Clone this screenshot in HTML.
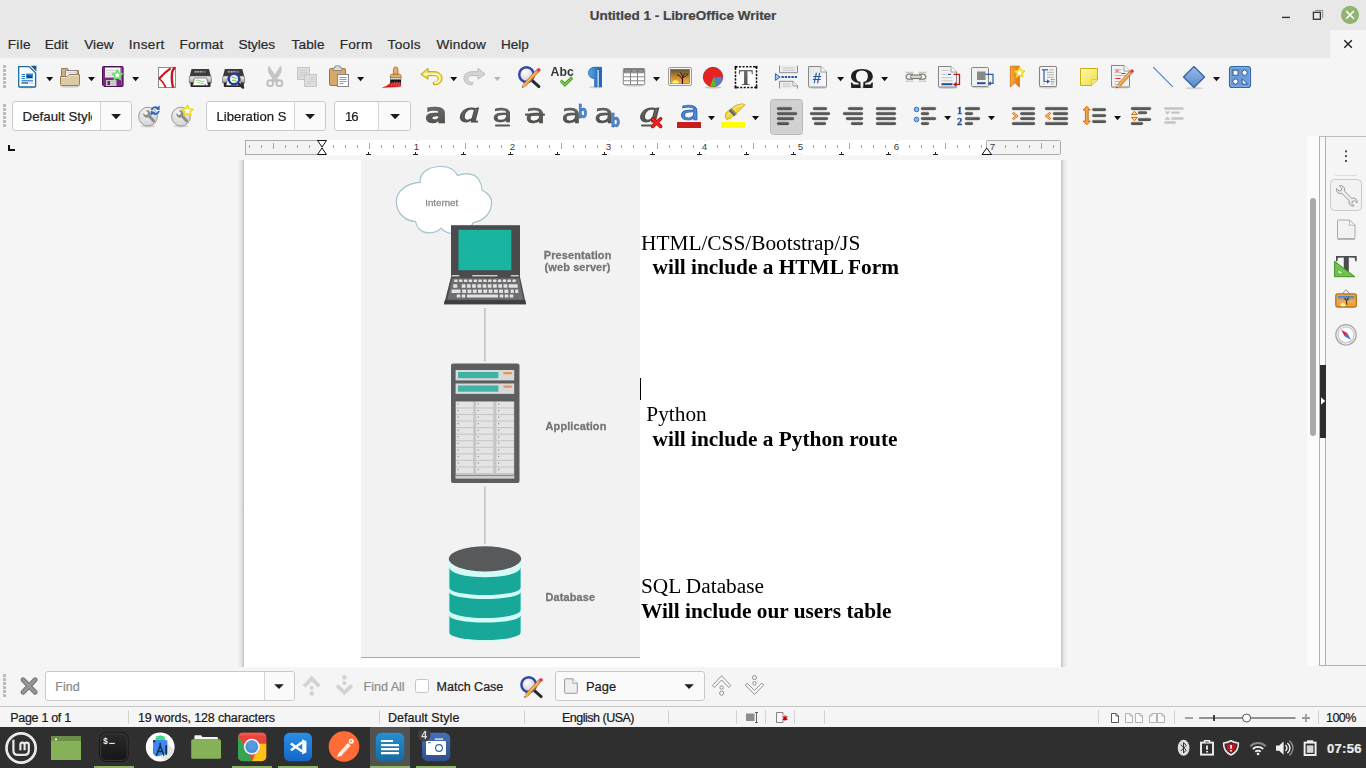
<!DOCTYPE html>
<html lang="en">
<head>
<meta charset="utf-8">
<title>Untitled 1 - LibreOffice Writer</title>
<style>
html,body{margin:0;padding:0;}
body{width:1366px;height:768px;overflow:hidden;position:relative;background:#f5f5f5;font-family:"Liberation Sans",sans-serif;font-size:13.4px;color:#2e2e2e;}
.abs{position:absolute;}
.t{position:absolute;white-space:pre;line-height:16px;-webkit-text-stroke:0.22px;}
svg{position:absolute;overflow:visible;}
/* title + menu */
#titlebar{left:0;top:0;width:1366px;height:58px;background:#e8e8e8;}
#title{left:0;width:1366px;top:8px;text-align:center;font-weight:bold;font-size:13.5px;color:#444;letter-spacing:-0.02px;}
.menu{top:37px;font-size:13.6px;color:#2b2b2b;}
#docclose{left:1330px;top:30px;width:36px;height:28px;background:#f5f5f5;}
/* toolbars */
#tb{left:0;top:58px;width:1366px;height:80px;background:#f5f5f5;}
.combo{position:absolute;background:#fff;border:1px solid #c9c9c9;border-radius:3px;box-sizing:border-box;}
.combo .sep{position:absolute;top:0;bottom:0;width:1px;background:#d4d4d4;}
.arr{position:absolute;width:0;height:0;border-left:4px solid transparent;border-right:4px solid transparent;border-top:4px solid #222;}
.arrs{position:absolute;width:0;height:0;border-left:3.5px solid transparent;border-right:3.5px solid transparent;border-top:4px solid #222;}
/* document */
#page{left:244px;top:160px;width:817px;height:507px;background:#fff;}
#pshadowL{left:237px;top:160px;width:7px;height:507px;background:linear-gradient(to right,#f5f5f5,#ebebeb 45%,#d6d6d6 80%,#bdbdbd);}
#pshadowR{left:1061px;top:160px;width:7px;height:507px;background:linear-gradient(to right,#bdbdbd,#d6d6d6 20%,#ebebeb 55%,#f5f5f5);}
#img{left:361px;top:160px;width:279px;height:497px;background:#f2f2f2;border-bottom:1px solid #a8a8a8;}
#doctext{left:641px;top:230.6px;font-family:"Liberation Serif",serif;font-size:21.33px;line-height:24.53px;color:#000;white-space:pre;}
#doctext b{font-weight:bold;}
#cursor{left:640px;top:378px;width:1.3px;height:22px;background:#000;}
/* find + status */
#findbar{left:0;top:667px;width:1366px;height:39px;background:#f5f5f5;}
#status{left:0;top:706px;width:1366px;height:21px;background:#f5f5f5;border-top:1px solid #c6c6c6;box-sizing:border-box;}
.vsep{position:absolute;width:1px;background:#d0d0d0;}
/* taskbar */
#taskbar{left:0;top:727px;width:1366px;height:41px;background:#2f2f2f;}
</style>
</head>
<body>
<!-- TITLE + MENU -->
<div id="titlebar" class="abs"></div>
<div id="title" class="t">Untitled 1 - LibreOffice Writer</div>
<div id="docclose" class="abs"></div>
<div class="t menu" style="left:7.8px;letter-spacing:0.27px">File</div>
<div class="t menu" style="left:44.8px;letter-spacing:-0.10px">Edit</div>
<div class="t menu" style="left:84.3px;letter-spacing:0.00px">View</div>
<div class="t menu" style="left:128.8px;letter-spacing:0.30px">Insert</div>
<div class="t menu" style="left:179.6px;letter-spacing:0.14px">Format</div>
<div class="t menu" style="left:238.4px;letter-spacing:-0.08px">Styles</div>
<div class="t menu" style="left:291.6px;letter-spacing:0.10px">Table</div>
<div class="t menu" style="left:339.8px;letter-spacing:0.23px">Form</div>
<div class="t menu" style="left:387.6px;letter-spacing:0.30px">Tools</div>
<div class="t menu" style="left:436.4px;letter-spacing:0.24px">Window</div>
<div class="t menu" style="left:501.0px;letter-spacing:-0.07px">Help</div>
<svg id="winbtns" style="left:0;top:0" width="1366" height="60" viewBox="0 0 1366 60">
<path d="M1282,17.4h8" stroke="#333" stroke-width="1.4"/>
<path d="M1315.2,10.4h7.5v7.6" fill="none" stroke="#8a8a8a" stroke-width="1"/>
<rect x="1313.4" y="12.3" width="7" height="7" fill="none" stroke="#333" stroke-width="1.3"/>
<circle cx="1350" cy="14.9" r="9.1" fill="#90b472"/>
<path d="M1346.2,11.1l7.6,7.6M1353.8,11.1l-7.6,7.6" stroke="#fff" stroke-width="1.5"/>
<path d="M1344.3,40.2l7.5,7.5M1351.8,40.2l-7.5,7.5" stroke="#1e1e1e" stroke-width="1.4"/>
</svg>

<!-- TOOLBARS -->
<div id="tb" class="abs"></div>
<svg id="tb1" style="left:0;top:0;will-change:transform" width="1366" height="140" viewBox="0 0 1366 140">
<defs>
<linearGradient id="gPage" x1="0" y1="0" x2="1" y2="1"><stop offset="0" stop-color="#e4e4e4"/><stop offset="1" stop-color="#fbfbfb"/></linearGradient>
<linearGradient id="gBlueV" x1="0" y1="0" x2="0" y2="1"><stop offset="0" stop-color="#9dbde6"/><stop offset="1" stop-color="#5588cc"/></linearGradient>
<linearGradient id="gPil" x1="0" y1="0" x2="1" y2="0"><stop offset="0" stop-color="#58a6ea"/><stop offset="1" stop-color="#1d62ad"/></linearGradient>
<linearGradient id="gSun" x1="0" y1="0" x2="0" y2="1"><stop offset="0" stop-color="#5e5238"/><stop offset="0.55" stop-color="#c98a32"/><stop offset="1" stop-color="#fbb03b"/></linearGradient>
<linearGradient id="gYel" x1="0" y1="0" x2="1" y2="1"><stop offset="0" stop-color="#fdf9b0"/><stop offset="1" stop-color="#f0dc3c"/></linearGradient>
<linearGradient id="gOr" x1="0" y1="0" x2="1" y2="0"><stop offset="0" stop-color="#f9a94a"/><stop offset="1" stop-color="#e4750c"/></linearGradient>
<linearGradient id="gPrn" x1="0" y1="0" x2="0" y2="1"><stop offset="0" stop-color="#f4f4f4"/><stop offset="1" stop-color="#9c9c9c"/></linearGradient>
<linearGradient id="gBar" x1="0" y1="0" x2="0" y2="1"><stop offset="0" stop-color="#8d8f8a"/><stop offset="0.5" stop-color="#555753"/><stop offset="1" stop-color="#3c3d3a"/></linearGradient>
<linearGradient id="gBarD" x1="0" y1="0" x2="0" y2="1"><stop offset="0" stop-color="#d6d6d6"/><stop offset="1" stop-color="#b4b4b4"/></linearGradient>
<linearGradient id="gGlyph" x1="0" y1="0" x2="0" y2="1"><stop offset="0" stop-color="#777975"/><stop offset="1" stop-color="#4a4b48"/></linearGradient>
<radialGradient id="gGlass" cx="0.4" cy="0.35" r="0.7"><stop offset="0" stop-color="#ffffff"/><stop offset="1" stop-color="#c9ccd6"/></radialGradient>
<radialGradient id="gDisc" cx="0.4" cy="0.3" r="0.8"><stop offset="0" stop-color="#f4f4f4"/><stop offset="1" stop-color="#cfcfcf"/></radialGradient>
</defs>
<!-- grips -->
<g fill="#bcbcbc">
<rect x="3" y="65" width="3" height="3"/><rect x="3" y="69" width="3" height="3"/><rect x="3" y="73" width="3" height="3"/><rect x="3" y="77" width="3" height="3"/><rect x="3" y="81" width="3" height="3"/><rect x="3" y="85" width="3" height="3"/>
<rect x="3" y="104" width="3" height="3"/><rect x="3" y="108" width="3" height="3"/><rect x="3" y="112" width="3" height="3"/><rect x="3" y="116" width="3" height="3"/><rect x="3" y="120" width="3" height="3"/><rect x="3" y="124" width="3" height="3"/>
</g>
<!-- dropdown arrows tb1 -->
<g fill="#111">
<path d="M46.2,77h7l-3.5,4.2z"/><path d="M88,77h7l-3.5,4.2z"/><path d="M132.1,77h7l-3.5,4.2z"/><path d="M357.1,77h7l-3.5,4.2z"/><path d="M450.2,77h7l-3.5,4.2z"/><path d="M653,77h7l-3.5,4.2z"/><path d="M837.1,77h7l-3.5,4.2z"/><path d="M881.1,77h7l-3.5,4.2z"/><path d="M1213,77h7l-3.5,4.2z"/>
</g>
<path d="M494,77h6.6l-3.3,4z" fill="#b4b4b4"/>
<!-- new doc -->
<ellipse cx="27.5" cy="87.3" rx="8" ry="1.2" fill="#000" opacity="0.12"/>
<path d="M18.7,66.6h10.5l6.4,6.4v13.2a0.8,0.8 0 0 1 -0.8,0.8h-15.3a0.8,0.8 0 0 1 -0.8,-0.8z" fill="#fff" stroke="#1c6aa0" stroke-width="1.3"/>
<path d="M30.7,65.8h5.7v5.7z" fill="#17598c"/>
<g stroke="#2277c2" stroke-width="1"><path d="M21.5,74.5h3.5M21.5,76.5h3.5M21.5,78.5h3.5"/><path d="M21.5,80.8h11.5" stroke-width="1.2"/><path d="M21.5,83h6.5" stroke-width="1.4" stroke="#1b5f9e"/><path d="M28.5,83h4.5" stroke="#cfcfcf" stroke-width="1.4"/></g>
<rect x="26" y="73.5" width="7" height="5" fill="#2f8de0"/><path d="M27,78v-2l1.5,-1.5l1.5,1.5l1,-1l1,1v2z" fill="#174a7c"/>
<!-- open folder -->
<ellipse cx="70" cy="86.6" rx="9.5" ry="1.2" fill="#000" opacity="0.15"/>
<path d="M61.5,68.5h6l1.5,2h9.5v8h-17z" fill="#c7b08a" stroke="#9a7f55" stroke-width="1"/>
<rect x="65.5" y="70.5" width="11.5" height="7" fill="#fff" stroke="#8a8a8a" stroke-width="1"/>
<rect x="66.5" y="71.5" width="9.5" height="2" fill="#d8d8d8"/>
<path d="M60.5,76.5h6.5l2,-2h10.5v10.2a0.8,0.8 0 0 1 -0.8,0.8h-17.4a0.8,0.8 0 0 1 -0.8,-0.8z" fill="#dccaa7" stroke="#9a7f55" stroke-width="1"/>
<path d="M61.5,77.5h5.9l2,-2h9" stroke="#ece0c8" stroke-width="1" fill="none"/>
<!-- save -->
<path d="M103.3,66.5h19a0.8,0.8 0 0 1 0.8,0.8v18.4a0.8,0.8 0 0 1 -0.8,0.8h-18.2l-1.6,-1.6v-17.6a0.8,0.8 0 0 1 0.8,-0.8z" fill="#77297f" stroke="#4b1355" stroke-width="1"/>
<rect x="105" y="67.5" width="15.5" height="10" fill="#f4f4f4"/>
<path d="M106,70.5h13M106,73h13M106,75.5h13" stroke="#c9c9c9" stroke-width="0.8"/>
<rect x="106" y="80" width="10.5" height="6" fill="#c8c8c4"/><rect x="107.5" y="81" width="2.5" height="4" fill="#5d2a68"/>
<path d="M121.5,67.5v17.5" stroke="#9b4fa4" stroke-width="1"/>
<path d="M117.3,70.2l1.45,3.1l3.4,0.4l-2.5,2.3l0.65,3.35l-3,-1.65l-3,1.65l0.65,-3.35l-2.5,-2.3l3.4,-0.4z" fill="#fbfffb" stroke="#6fdc6f" stroke-width="1.7" stroke-linejoin="round"/>
<!-- pdf -->
<rect x="158.5" y="67.5" width="17" height="20" fill="#fdfdfd" stroke="#8e8e8e" stroke-width="1"/>
<path d="M175.2,67.5C172.6,69 171.6,72 171.8,78C172,83 172.5,86 173.3,87.6" fill="none" stroke="#c8171c" stroke-width="2.4"/>
<path d="M170.6,68.4C166.8,71 162.6,74.8 159,78.8" fill="none" stroke="#c8171c" stroke-width="2.1"/><path d="M159,78.6C161.6,80.4 164.2,84 165.8,87.6" fill="none" stroke="#c8171c" stroke-width="1.7"/>


<!-- printer -->
<g id="prn">
<path d="M191.5,69h17.5l2,8h-21.5z" fill="#3a3a3a"/>
<rect x="194" y="70.8" width="12" height="2" rx="0.5" fill="#6c6c6c"/><path d="M195,71.8h1.5M197.5,71.8h1.5M200,71.8h1.5" stroke="#cfcfcf" stroke-width="0.9"/>
<path d="M189.3,77.5q0,-1.5 1.5,-1.5h19q1.5,0 1.5,1.5v5.5h-22z" fill="url(#gPrn)" stroke="#555" stroke-width="0.6"/>
<path d="M190.5,82.5h20v3.5q0,1 -1,1h-18q-1,0 -1,-1z" fill="#262626"/>
<path d="M194.5,78h12l1.8,7.5h-15.6z" fill="#fff" stroke="#444" stroke-width="0.6"/>
<path d="M196,80.5q2,-1.2 4,0.3t4.5,0.4M197,83q2,-1 3.5,0t3,0.3" stroke="#8fcf6f" stroke-width="1" fill="none"/>
<rect x="204.5" y="84" width="1.5" height="1" fill="#3b8be0"/>
</g>
<!-- print preview -->
<use href="#prn" x="33.3"/>
<path d="M238,83l5,4.5" stroke="#2b2b2b" stroke-width="2.6" stroke-linecap="round"/>
<circle cx="234" cy="79" r="5.2" fill="#f4f7f4" stroke="#2a3b9a" stroke-width="2.4"/>
<path d="M231.5,77.5q1.5,-1 3,0.3t2.3,0.2M232,80.5q1.3,-0.8 2.4,0t2,0.2" stroke="#7cc65c" stroke-width="1.1" fill="none"/>
<!-- scissors (disabled) -->
<g fill="#c6c6c6" stroke="#b9b9b9" stroke-width="0.6">
<path d="M269,66.2c-1.3,3.5 -0.5,6.5 1.6,9.5l4.6,6l2.3,-2.2z"/>
<path d="M280.6,66.2c1.3,3.5 0.5,6.5 -1.6,9.5l-4.6,6l-2.3,-2.2z"/>
</g>
<circle cx="270.2" cy="83.2" r="2.9" fill="none" stroke="#bdbdbd" stroke-width="1.9"/>
<circle cx="279.4" cy="83.2" r="2.9" fill="none" stroke="#bdbdbd" stroke-width="1.9"/>
<!-- copy (disabled) -->
<rect x="297.5" y="67.5" width="12" height="12" fill="#dedede" stroke="#c6c6c6"/>
<path d="M299.5,70.5h8M299.5,72.5h8M299.5,74.5h8M299.5,76.5h4" stroke="#cacaca" stroke-width="0.8"/>
<rect x="304.5" y="74.5" width="12" height="12" fill="#dedede" stroke="#c6c6c6"/>
<path d="M309.8,77.5h5M309.8,79.5h5M306.5,81.5h8M306.5,83.5h4" stroke="#cacaca" stroke-width="0.8"/>
<!-- paste -->
<rect x="329.5" y="68.5" width="16" height="17" rx="1.6" fill="#dba764" stroke="#a5722c" stroke-width="1"/>
<path d="M333,70.5v-2.5h2v-1.5q0,-0.6 0.6,-0.6h4q0.6,0 0.6,0.6v1.5h2v2.5z" fill="#dcdcdc" stroke="#767676" stroke-width="0.8"/>
<rect x="337.5" y="74.5" width="11" height="12" fill="#fcfcfc" stroke="#858585" stroke-width="1"/>
<path d="M339.5,77.5h7M339.5,79.5h7M339.5,81.5h7M339.5,83.5h4" stroke="#8f8f8f" stroke-width="0.9"/>
<!-- clone formatting brush -->
<path d="M384,86.8l14,-1l5,1.4l-21,1z" fill="#000" opacity="0.2"/>
<path d="M393.4,74.4v-4.8q0,-2.7 2.3,-2.7t2.3,2.7v4.8z" fill="#dfae68" stroke="#a06c24" stroke-width="0.8"/>
<path d="M390.4,77.5v-1.7q0,-1.5 1.5,-1.5h7.6q1.5,0 1.5,1.5v1.7z" fill="#e3b26a" stroke="#a06c24" stroke-width="0.8"/>
<rect x="390.3" y="77.3" width="10.8" height="2.4" fill="#d4d4d4" stroke="#5a5a5a" stroke-width="0.5"/>
<path d="M390.3,79.7h10.8l-0.3,6.3h-11z" fill="#151515"/>
<path d="M389.9,83.4q5,-1.6 11,-0.7l-0.3,3.7q-6,0.7 -11.4,0.9l-7.6,0.5q5.2,-1.6 8.3,-4.4z" fill="#dc1a1a"/>
<path d="M392.2,82l-0.6,3.8M394.6,81.6l-0.5,4.2M397,81.6l-0.4,4.2M399.2,81.8l-0.3,3.8" stroke="#f07878" stroke-width="0.7"/>
<!-- undo -->
<path id="undo" d="M420.8,74.3l7.2,-6v3.4h6.2c4.8,0 7.8,2.6 7.8,6.6c0,4 -3.2,6.5 -8.2,6.5l-0.6,-2.3c3.3,0 5,-1.4 5,-3.8c0,-2.2 -1.6,-3.1 -4.2,-3.1h-6v3.6z" fill="#f6e45a" stroke="#b9a008" stroke-width="1" stroke-linejoin="round"/>
<path d="M424.5,74.4h10c3.3,0 5.2,1.6 5.2,3.9c0,2.6 -2,4 -4.6,4.2" fill="none" stroke="#fffbd2" stroke-width="1.3" stroke-linecap="round"/>
<!-- redo disabled -->
<path d="M485.2,74.3l-7.2,-6v3.4h-6.2c-4.8,0 -7.8,2.6 -7.8,6.6c0,4 3.2,6.5 8.2,6.5l0.6,-2.3c-3.3,0 -5,-1.4 -5,-3.8c0,-2.2 1.6,-3.1 4.2,-3.1h6v3.6z" fill="#d4d4d4" stroke="#bcbcbc" stroke-width="1" stroke-linejoin="round"/>
<!-- find & replace -->
<path d="M532.5,80.8l6.4,5.8" stroke="#2a2a2a" stroke-width="3" stroke-linecap="round"/>
<circle cx="526.5" cy="74.6" r="7.3" fill="url(#gGlass)" stroke="#3348a8" stroke-width="2.5"/>
<path d="M523.3,84.2l13.2,-14.4l2.3,2.1l-13.2,14.4l-3.3,1.2z" fill="#f29a2e" stroke="#b5651a" stroke-width="0.6"/>
<path d="M524.5,84.9l12.6,-13.8" stroke="#fbd08a" stroke-width="0.8"/>
<path d="M536.5,69.8l1.2,-1.3q1,-0.8 2,0.1l0.6,0.6q0.8,1 -0.1,1.9l-1.4,0.8z" fill="#e8343c"/>
<path d="M535.6,70.8l0.9,-1l2.3,2.1l-0.9,1z" fill="#9a9a9a"/>
<path d="M522.3,87.5l1,-3.3l2.3,2.1z" fill="#e8c9a0"/><path d="M522.3,87.5l0.4,-1.4l1,0.9z" fill="#222"/>
<!-- spellcheck -->
<text x="550.6" y="76" font-family="Liberation Sans, sans-serif" font-weight="bold" font-size="12.4px" fill="#33393b" textLength="23.2" lengthAdjust="spacingAndGlyphs">Abc</text>
<path d="M560.8,80.5l4,4.2l7.4,-7.2" fill="none" stroke="#3f9e1c" stroke-width="3.2" stroke-linejoin="miter"/>
<path d="M560.8,80.5l4,4.2l7.4,-7.2" fill="none" stroke="#7bd14b" stroke-width="1.4"/>
<!-- pilcrow -->
<ellipse cx="596" cy="87.2" rx="7" ry="1.1" fill="#000" opacity="0.15"/>
<path d="M594.3,67.3h7.2v19.5h-2.6v-17.2h-1.6v17.2h-2.6v-8.3h-0.6a5.6,5.6 0 0 1 0,-11.2z" fill="url(#gPil)" stroke="#1a5a9f" stroke-width="0.8"/><path d="M598.1,70v16.6" stroke="#d8e8f8" stroke-width="1"/>
<!-- table -->
<ellipse cx="634" cy="85.8" rx="10" ry="1" fill="#000" opacity="0.12"/>
<rect x="623.3" y="68.5" width="21.4" height="16.2" rx="0.8" fill="#fff" stroke="#858585" stroke-width="1"/>
<rect x="623.8" y="69" width="20.4" height="3.6" fill="#777"/>
<path d="M625,70.7h4.6M632,70.7h4.6M639,70.7h4.2" stroke="#9d9d9d" stroke-width="1.4"/>
<path d="M623.5,72.8h21M623.5,76.8h21M623.5,80.8h21M630.5,68.5v16M637.5,68.5v16" stroke="#858585" stroke-width="1"/>
</svg>

<svg id="tb1b" style="left:0;top:0;will-change:transform" width="1366" height="140" viewBox="0 0 1366 140">
<!-- image -->
<rect x="668.5" y="67.5" width="23" height="18" rx="1.5" fill="#f4f4f4" stroke="#9b9b9b" stroke-width="1"/>
<rect x="670.5" y="69.5" width="19" height="14" fill="url(#gSun)" stroke="#5a4d36" stroke-width="0.5"/>
<clipPath id="cpImg"><rect x="670.5" y="69.5" width="19" height="14"/></clipPath>
<circle cx="675.5" cy="83.5" r="3.2" fill="#fff27a" clip-path="url(#cpImg)"/>
<path d="M682.4,83.5v-4.5l-2.6,-3l-2.2,-1M682.4,79.5l0.3,-3l2.4,-3.3M682.7,76.5l-2,-3.8M683,77.5l3.3,-1.5l1.7,-2.5" stroke="#151008" stroke-width="0.9" fill="none" stroke-linecap="round"/>
<path d="M681.9,83.5v-3.5h1.2v3.5z" fill="#151008"/>
<!-- chart -->
<ellipse cx="713" cy="87.3" rx="8.5" ry="1.2" fill="#000" opacity="0.18"/>
<circle cx="713" cy="77" r="9.7" fill="#e62323" stroke="#b51414" stroke-width="0.8"/>
<path d="M713.5,77.3h9.2a9.7,9.7 0 0 1 -6.4,8.8z" fill="#4f83c6"/>
<path d="M713.5,77.3l2.8,8.8a9.7,9.7 0 0 1 -6.2,0.1z" fill="#5dba2c"/>
<!-- text box -->
<rect x="735.5" y="66.8" width="21" height="20.8" fill="#fff" stroke="#111" stroke-width="1.5" stroke-dasharray="2.1 1.4"/>
<g fill="#111"><rect x="734.6" y="65.9" width="2.2" height="2.2"/><rect x="755.2" y="65.9" width="2.2" height="2.2"/><rect x="734.6" y="86.3" width="2.2" height="2.2"/><rect x="755.2" y="86.3" width="2.2" height="2.2"/></g>
<text transform="translate(745.9,85.1) scale(0.92,1)" text-anchor="middle" font-family="Liberation Serif, serif" font-weight="bold" font-size="23.8px" fill="url(#gGlyph)">T</text>
<!-- page break -->
<path d="M779.5,65.5v7.2h18v-7.2" fill="#ededed" stroke="#8d8d8d" stroke-width="1"/>
<path d="M782.5,68h12M782.5,70.3h12" stroke="#c2c2c2" stroke-width="0.9"/>
<path d="M779.5,88.5v-7.2h13.5l4.5,4.5v2.7" fill="#ededed" stroke="#8d8d8d" stroke-width="1"/>
<path d="M793,81.3v4.5h4.5" fill="#fafafa" stroke="#8d8d8d" stroke-width="0.8"/>
<path d="M782.5,84h8M782.5,86.3h8" stroke="#c2c2c2" stroke-width="0.9"/>
<path d="M781.5,77h16.5" stroke="#2452a4" stroke-width="2" stroke-dasharray="2.3 1"/>
<path d="M775.4,73.6l4.8,3.4l-4.8,3.4z" fill="#a9c2e8" stroke="#2858ad" stroke-width="0.9"/>
<!-- field # -->
<ellipse cx="818" cy="87.8" rx="9" ry="1" fill="#000" opacity="0.18"/>
<path d="M808.5,66.5h12.5l5.5,5.5v14.2a0.8,0.8 0 0 1 -0.8,0.8h-16.4a0.8,0.8 0 0 1 -0.8,-0.8z" fill="url(#gPage)" stroke="#8a8a8a" stroke-width="1"/>
<path d="M821,66.5v5.5h5.5" fill="#fafafa" stroke="#8a8a8a" stroke-width="0.8"/>
<text transform="translate(817.1,83.4) scale(0.95,1)" text-anchor="middle" font-family="Liberation Sans, sans-serif" font-size="15.2px" fill="#2455a8" stroke="#2455a8" stroke-width="0.3">#</text>
<!-- omega -->
<ellipse cx="862" cy="87.3" rx="10" ry="1" fill="#000" opacity="0.12"/>
<text transform="translate(862,87.9) scale(1.05,1.03)" text-anchor="middle" font-family="Liberation Serif, serif" font-weight="bold" font-size="29.5px" fill="#1f1f1f">Ω</text>
<!-- hyperlink chain -->
<g fill="none" stroke="#8e908a" stroke-width="1.5">
<path d="M913,74.3h-4.2q-2.6,0 -2.6,2.5t2.6,2.5h4.2"/>
<path d="M919,74.3h4.2q2.6,0 2.6,2.5t-2.6,2.5h-4.2"/>
</g>
<rect x="910.5" y="75" width="11" height="3.6" rx="1.6" fill="#d3d5cf" stroke="#6d6f6a" stroke-width="1"/>
<path d="M905.5,72.3h8M918.5,72.3h8M905.5,81.2h8M918.5,81.2h8" stroke="#8e908a" stroke-width="0.8" opacity="0.7"/>
<!-- footnote -->
<ellipse cx="948" cy="87.8" rx="10" ry="1" fill="#000" opacity="0.18"/>
<path d="M938.5,66.5h12.5l5.5,5.5v14.2a0.8,0.8 0 0 1 -0.8,0.8h-16.4a0.8,0.8 0 0 1 -0.8,-0.8z" fill="#f3f3f3" stroke="#858585" stroke-width="1"/>
<path d="M951,66.5v5.5h5.5" fill="#fdfdfd" stroke="#858585" stroke-width="0.8"/>
<path d="M941.5,70.3h7.5M941.5,74.4h5.5M941.5,77.8h11M941.5,80.8h11" stroke="#bdbdbd" stroke-width="0.9"/>
<path d="M948,74.4h3" stroke="#1f4f9c" stroke-width="1.1"/>
<path d="M941.5,84.2h11" stroke="#1f4f9c" stroke-width="2"/>
<path d="M953.5,74.4h6v10h-4" fill="none" stroke="#cf1212" stroke-width="1.3"/>
<path d="M953,84.4l3.2,-2.4v4.8z" fill="#cf1212"/>
<!-- caption -->
<ellipse cx="981" cy="87.3" rx="9" ry="1" fill="#000" opacity="0.15"/>
<rect x="971.5" y="67.5" width="17" height="19" rx="1.2" fill="#f1f1f1" stroke="#858585" stroke-width="1"/>
<circle cx="973.7" cy="74.5" r="0.6" fill="#fff"/><circle cx="973.7" cy="79" r="0.6" fill="#fff"/>
<rect x="977" y="71.5" width="8.5" height="8.5" fill="#888a85"/>
<path d="M977,83.2h8.5" stroke="#1f4f9c" stroke-width="2"/>
<path d="M985.5,74.4h7.5v9h-3.5" fill="none" stroke="#2a5caa" stroke-width="1.2"/>
<path d="M987.8,83.4l3,-2.3v4.6z" fill="#2a5caa"/>
<!-- bookmark -->
<path d="M1010.4,66.2h9v20.8l-4.5,-4.2l-4.5,4.2z" fill="url(#gOr)" stroke="#d06c08" stroke-width="0.8" stroke-linejoin="round"/>
<path d="M1019.6,67.6l1.45,3.1l3.4,0.4l-2.5,2.3l0.65,3.35l-3,-1.65l-3,1.65l0.65,-3.35l-2.5,-2.3l3.4,-0.4z" fill="#fffef0" stroke="#ecd72a" stroke-width="1.6" stroke-linejoin="round"/>
<!-- cross reference -->
<ellipse cx="1048" cy="87.5" rx="9" ry="1" fill="#000" opacity="0.15"/>
<rect x="1039.5" y="66.5" width="17" height="20" rx="1.4" fill="#f7f7f7" stroke="#858585" stroke-width="1.1"/>
<path d="M1049,69.8h5M1047,72.3h7M1047,74.8h7M1047,77.3h7M1042.5,84h2M1050.5,84h3.5" stroke="#a9a9a9" stroke-width="0.9"/>
<path d="M1042,69.8h6" stroke="#2a5caa" stroke-width="1.2"/>
<path d="M1044,70v11.5h3.5" fill="none" stroke="#2a5caa" stroke-width="1.2"/>
<path d="M1050,81.5l-3,-2.3v4.6z" fill="#2a5caa"/>
<path d="M1051,79.6h3.5M1051,81.8h3.5" stroke="#2a5caa" stroke-width="0.9" stroke-dasharray="1.6 0.8"/>
<!-- sticky note -->
<path d="M1080.5,68.5h17v11.2l-5.8,5.8h-11.2z" fill="url(#gYel)" stroke="#c7b009" stroke-width="1"/>
<path d="M1097.5,79.7h-5.8v5.8z" fill="#cdbc2a" stroke="#c7b009" stroke-width="0.6"/>
<path d="M1091.7,79.7h5.8l-5.8,5.8z" fill="#f9f3a8" opacity="0.8"/>
<!-- track changes -->
<ellipse cx="1121" cy="87.5" rx="10" ry="1" fill="#000" opacity="0.15"/>
<path d="M1111.5,65.5h12.5l5.5,5.5v15.2a0.8,0.8 0 0 1 -0.8,0.8h-16.4a0.8,0.8 0 0 1 -0.8,-0.8z" fill="#f1f1f1" stroke="#858585" stroke-width="1"/>
<path d="M1124,65.5v5.5h5.5" fill="#fdfdfd" stroke="#858585" stroke-width="0.8"/>
<path d="M1114.5,69.5h7M1114.5,72.5h7M1114.5,75.5h11M1114.5,78.5h3M1114.5,81.5h8M1114.5,84.3h3" stroke="#b8b8b8" stroke-width="0.9"/>
<path d="M1115.5,71h3.3M1121.5,73.5h4M1115.5,78.5h5" stroke="#e2282e" stroke-width="1.1"/>
<path d="M1117.6,84.6l12.2,-13.6l2.4,2.1l-12.2,13.6l-3.4,1.2z" fill="#f29a2e" stroke="#b5651a" stroke-width="0.6"/>
<path d="M1118.8,85.2l11.8,-13.1" stroke="#fbd08a" stroke-width="0.8"/>
<path d="M1129.8,71l1.2,-1.3q1,-0.8 2,0.1l0.6,0.6q0.8,1 -0.1,1.9l-1.3,0.8z" fill="#e8343c"/>
<path d="M1128.9,72l0.9,-1l2.4,2.1l-0.9,1z" fill="#9a9a9a"/>
<path d="M1116.4,87.9l1.2,-3.3l2.2,2.1z" fill="#e8c9a0"/><path d="M1116.4,87.9l0.5,-1.4l1,0.9z" fill="#222"/>
<!-- line -->
<path d="M1153.2,67.2l19.6,19.6" stroke="#4a86c8" stroke-width="1.2"/>
<!-- diamond -->
<ellipse cx="1194" cy="88.2" rx="9" ry="1.1" fill="#000" opacity="0.14"/>
<path d="M1194,66.5l10.6,10.5l-10.6,10.5l-10.6,-10.5z" fill="url(#gBlueV)" stroke="#2f5f9f" stroke-width="1.1" stroke-linejoin="round"/>
<!-- draw functions -->
<rect x="1229.5" y="66.5" width="21" height="21" rx="2.6" fill="#6b9bd8" stroke="#3465a4" stroke-width="1.1"/>
<rect x="1230.6" y="67.6" width="18.8" height="18.8" rx="1.8" fill="none" stroke="#8cb2e3" stroke-width="0.8"/>
<rect x="1233" y="70.2" width="5" height="5" fill="#fff" stroke="#234f8c" stroke-width="0.9"/>
<circle cx="1244.6" cy="72.7" r="2.6" fill="#fff" stroke="#234f8c" stroke-width="0.9"/>
<circle cx="1235.5" cy="81.5" r="2.6" fill="#fff" stroke="#234f8c" stroke-width="0.9"/>
<path d="M1242.2,84v-5.2l5.2,5.2z" fill="#fff" stroke="#234f8c" stroke-width="0.9"/>
</svg>

<!-- combos -->
<div class="combo" style="left:12px;top:101px;width:120px;height:30px;"><div class="sep" style="left:86.6px"></div><div style="position:absolute;left:87.6px;top:0;right:0;bottom:0;background:#fafafa;border-radius:0 3px 3px 0"></div></div>
<div class="t" style="left:22.6px;top:109px;width:69.2px;overflow:hidden;font-size:13.3px;color:#1c1c1c;">Default Style</div>
<div class="combo" style="left:206px;top:101px;width:120px;height:30px;"><div class="sep" style="left:86.6px"></div><div style="position:absolute;left:87.6px;top:0;right:0;bottom:0;background:#fafafa;border-radius:0 3px 3px 0"></div></div>
<div class="t" style="left:216.5px;top:109px;width:70.5px;overflow:hidden;font-size:13.1px;color:#1c1c1c;">Liberation Serif</div>
<div class="combo" style="left:334px;top:101px;width:77px;height:30px;"><div class="sep" style="left:43.4px"></div><div style="position:absolute;left:44.4px;top:0;right:0;bottom:0;background:#fafafa;border-radius:0 3px 3px 0"></div></div>
<div class="t" style="left:345px;top:109px;font-size:13.2px;letter-spacing:-1px;color:#1c1c1c;">16</div>
<svg id="tb2" style="left:0;top:0;will-change:transform" width="1366" height="140" viewBox="0 0 1366 140">
<g fill="#1c1c1c">
<path d="M111.2,114h9.8l-4.9,5.2z"/><path d="M305.2,114h9.8l-4.9,5.2z"/><path d="M390.2,114h9.8l-4.9,5.2z"/>
</g>
<g fill="#111">
<path d="M708,116h7l-3.5,4.2z"/><path d="M752,116h7l-3.5,4.2z"/><path d="M944.2,116h7l-3.5,4.2z"/><path d="M988,116h7l-3.5,4.2z"/><path d="M1114,116h7l-3.5,4.2z"/>
</g>
<!-- update style -->
<g id="wr">
<ellipse cx="148" cy="126.3" rx="7.5" ry="1.1" fill="#000" opacity="0.15"/>
<circle cx="148" cy="116.6" r="9.4" fill="url(#gDisc)" stroke="#9b9b9b" stroke-width="1"/>
<g transform="translate(148.3,117.2) scale(0.86) translate(-148.3,-117.2)"><path d="M142.6,112.2l2.6,2.6l2.2,-0.6l0.6,-2.2l-2.6,-2.6a4.3,4.3 0 0 1 5.4,5.6l5,5.6a1.5,1.5 0 0 1 -2.3,2.2l-5.2,-5.4a4.3,4.3 0 0 1 -5.7,-5.2z" fill="#8a8c88"/></g>
</g>
<path d="M151.6,110.2a3.6,3.6 0 0 1 5.4,-2.6" fill="none" stroke="#2c64c0" stroke-width="1.8"/><path d="M159.8,105.6l-0.3,4.8l-4.5,-1.7z" fill="#2c64c0"/>
<path d="M158.8,111a3.6,3.6 0 0 1 -5.4,2.6" fill="none" stroke="#2c64c0" stroke-width="1.8"/><path d="M150.6,115.6l0.3,-4.8l4.5,1.7z" fill="#2c64c0"/>
<!-- new style -->
<use href="#wr" x="33"/>
<path d="M187.5,105.3l1.65,3.5l3.85,0.45l-2.85,2.6l0.75,3.8l-3.4,-1.9l-3.4,1.9l0.75,-3.8l-2.85,-2.6l3.85,-0.45z" fill="#fffef0" stroke="#ecd72a" stroke-width="1.6" stroke-linejoin="round"/>
<!-- bold -->
<text transform="translate(436,122.7) scale(1.24,1.05)" text-anchor="middle" font-family="DejaVu Sans, sans-serif" font-weight="bold" font-size="27px" fill="url(#gGlyph)" stroke="#3e3f3c" stroke-width="0.4">a</text>
<!-- italic -->
<text transform="translate(469.6,122.4) scale(1.25,0.9)" text-anchor="middle" font-family="Liberation Serif, serif" font-style="italic" font-size="33px" fill="url(#gGlyph)" stroke="#4a4b48" stroke-width="1">a</text>
<!-- underline -->
<text transform="translate(502.4,122) scale(1.3,0.98)" text-anchor="middle" font-family="DejaVu Sans, sans-serif" font-size="26px" fill="url(#gGlyph)" stroke="#3e3f3c" stroke-width="0.5">a</text>
<rect x="495" y="124.4" width="15" height="2.2" rx="0.8" fill="#555753"/>
<!-- strikethrough -->
<text transform="translate(535.3,122.5) scale(1.3,1.02)" text-anchor="middle" font-family="DejaVu Sans, sans-serif" font-size="26px" fill="url(#gGlyph)" stroke="#3e3f3c" stroke-width="0.5">a</text>
<rect x="525" y="113.4" width="20" height="2.4" rx="0.8" fill="#555753"/>
<!-- superscript -->
<text transform="translate(571.2,122.5) scale(1.26,1.02)" text-anchor="middle" font-family="DejaVu Sans, sans-serif" font-size="26px" fill="url(#gGlyph)" stroke="#3e3f3c" stroke-width="0.5">a</text>
<text x="578" y="118.3" font-family="DejaVu Sans, sans-serif" font-weight="bold" font-size="17px" fill="#4f8ad6" stroke="#1f4f9c" stroke-width="0.5" textLength="9.3" lengthAdjust="spacingAndGlyphs">b</text>
<!-- subscript -->
<text transform="translate(604,122.5) scale(1.26,1.02)" text-anchor="middle" font-family="DejaVu Sans, sans-serif" font-size="26px" fill="url(#gGlyph)" stroke="#3e3f3c" stroke-width="0.5">a</text>
<text x="610.8" y="126.5" font-family="DejaVu Sans, sans-serif" font-weight="bold" font-size="17px" fill="#4f8ad6" stroke="#1f4f9c" stroke-width="0.5" textLength="9.3" lengthAdjust="spacingAndGlyphs">b</text>
<!-- clear formatting -->
<text transform="translate(649.8,122.4) scale(1.25,0.9)" text-anchor="middle" font-family="Liberation Serif, serif" font-style="italic" font-size="33px" fill="url(#gGlyph)" stroke="#4a4b48" stroke-width="1">a</text>
<rect x="641" y="124.4" width="11" height="2.2" rx="0.8" fill="#555753"/>
<path d="M652.6,118.8l8,7.6M660.6,118.8l-8,7.6" stroke="#b50000" stroke-width="3.6" stroke-linecap="round"/>
<path d="M652.6,118.8l8,7.6M660.6,118.8l-8,7.6" stroke="#f02424" stroke-width="2.2" stroke-linecap="round"/>
<!-- font color -->
<text transform="translate(689.7,119.9) scale(1.26,1.02)" text-anchor="middle" font-family="DejaVu Sans, sans-serif" font-size="26.5px" fill="#4f8ad6" stroke="#2858ad" stroke-width="0.7">a</text>
<rect x="677" y="122" width="24" height="6" fill="#c81e1e"/>
<!-- highlight -->
<path d="M725.3,117.2l0.4,-4.2l9.8,-7.6l6,-1.6l3.6,0.6l-3.8,4.4l-10.6,9.6l-4,1.2z" fill="#f1d43c" stroke="#c2a20e" stroke-width="0.7" stroke-linejoin="round"/>
<path d="M727,115.5l9.5,-8.5l6.5,-2.2" stroke="#fbf0a0" stroke-width="1" fill="none"/>
<path d="M728.5,110.6l3,-2.3l5.2,5.6l-2.6,2.4z" fill="#5f605c"/>
<path d="M730.2,109.3l1.3,-1l5.2,5.6l-1.2,1.1z" fill="#8d8e8a"/>
<rect x="721" y="122" width="24" height="6" fill="#ffff00"/>
<!-- align left (active) -->
<rect x="770.5" y="99.5" width="32" height="35" rx="3" fill="#d1d1d1" stroke="#b9b9b9" stroke-width="1"/>
<g id="bars" fill="url(#gBar)" stroke="#3a3b38" stroke-width="0.5">
<rect x="777.2" y="107.35" width="14.6" height="2.4" rx="1.2"/><rect x="777.2" y="112.35" width="19.6" height="2.4" rx="1.2"/><rect x="777.2" y="117.35" width="16.6" height="2.4" rx="1.2"/><rect x="777.2" y="122.25" width="11.6" height="2.4" rx="1.2"/>
<!-- center -->
<rect x="813.2" y="107.35" width="13.6" height="2.4" rx="1.2"/><rect x="810.2" y="112.35" width="19.6" height="2.4" rx="1.2"/><rect x="812.2" y="117.35" width="15.6" height="2.4" rx="1.2"/><rect x="814.2" y="122.25" width="11.6" height="2.4" rx="1.2"/>
<!-- right -->
<rect x="848.2" y="107.35" width="14.6" height="2.4" rx="1.2"/><rect x="843.2" y="112.35" width="19.6" height="2.4" rx="1.2"/><rect x="846.2" y="117.35" width="16.6" height="2.4" rx="1.2"/><rect x="851.2" y="122.25" width="11.6" height="2.4" rx="1.2"/>
<!-- justify -->
<rect x="876.2" y="107.35" width="19.6" height="2.4" rx="1.2"/><rect x="876.2" y="112.35" width="19.6" height="2.4" rx="1.2"/><rect x="876.2" y="117.35" width="19.6" height="2.4" rx="1.2"/><rect x="876.2" y="122.25" width="19.6" height="2.4" rx="1.2"/>
<!-- bullets -->
<rect x="921.2" y="107.35" width="14.6" height="2.4" rx="1.2"/><rect x="921.2" y="112.35" width="7.6" height="2.4" rx="1.2"/><rect x="921.2" y="117.35" width="14.6" height="2.4" rx="1.2"/><rect x="921.2" y="122.25" width="7.6" height="2.4" rx="1.2"/>
<!-- numbering -->
<rect x="965.2" y="107.35" width="14.6" height="2.4" rx="1.2"/><rect x="965.2" y="112.35" width="7.6" height="2.4" rx="1.2"/><rect x="965.2" y="117.35" width="14.6" height="2.4" rx="1.2"/><rect x="965.2" y="122.25" width="7.6" height="2.4" rx="1.2"/>
<!-- increase indent -->
<rect x="1012.2" y="107.35" width="22.6" height="2.4" rx="1.2"/><rect x="1020.4" y="112.35" width="14.4" height="2.4" rx="1.2"/><rect x="1020.4" y="117.35" width="14.4" height="2.4" rx="1.2"/><rect x="1012.2" y="122.25" width="22.6" height="2.4" rx="1.2"/>
<!-- decrease indent -->
<rect x="1045.2" y="107.35" width="22.6" height="2.4" rx="1.2"/><rect x="1053.2" y="112.35" width="14.6" height="2.4" rx="1.2"/><rect x="1053.2" y="117.35" width="14.6" height="2.4" rx="1.2"/><rect x="1045.2" y="122.25" width="22.6" height="2.4" rx="1.2"/>
<!-- line spacing -->
<rect x="1092.4" y="108.35" width="13.4" height="2.4" rx="1.2"/><rect x="1092.4" y="114.35" width="13.4" height="2.4" rx="1.2"/><rect x="1092.4" y="120.25" width="13.4" height="2.4" rx="1.2"/>
<!-- para spacing increase -->
<rect x="1131.2" y="107.35" width="19.6" height="2.4" rx="1.2"/><rect x="1138.2" y="111.45" width="8.6" height="2.4" rx="1.2"/><rect x="1138.2" y="118.25" width="12.6" height="2.4" rx="1.2"/><rect x="1131.2" y="122.25" width="11.6" height="2.4" rx="1.2"/>
</g>
<!-- bullets dots -->
<circle cx="916.5" cy="109.5" r="2.3" fill="#8db3e6" stroke="#3a6fc0" stroke-width="1"/><circle cx="916.5" cy="119.5" r="2.3" fill="#8db3e6" stroke="#3a6fc0" stroke-width="1"/>
<!-- numbers -->
<text x="957" y="113.9" font-family="Liberation Serif, serif" font-weight="bold" font-size="10.5px" fill="#1f4f9c" stroke="#1f4f9c" stroke-width="0.3">1</text>
<text x="957" y="124.9" font-family="Liberation Serif, serif" font-weight="bold" font-size="10.5px" fill="#1f4f9c" stroke="#1f4f9c" stroke-width="0.3">2</text>
<!-- indent chevrons -->
<path d="M1012.8,112.6l4,3.4l-4,3.4" fill="none" stroke="#dd7408" stroke-width="2.5" stroke-linejoin="miter"/><path d="M1012.8,112.6l4,3.4l-4,3.4" fill="none" stroke="#fdd9a8" stroke-width="1"/>
<path d="M1050.6,112.6l-4,3.4l4,3.4" fill="none" stroke="#dd7408" stroke-width="2.5" stroke-linejoin="miter"/><path d="M1050.6,112.6l-4,3.4l4,3.4" fill="none" stroke="#fdd9a8" stroke-width="1"/>
<!-- line spacing arrow -->
<path d="M1086.8,106.2l3.6,3.8h-2.2v11h2.2l-3.6,3.8l-3.6,-3.8h2.2v-11h-2.2z" fill="#f4a450" stroke="#cc6600" stroke-width="0.9" stroke-linejoin="round"/>
<!-- para spacing triangles -->
<path d="M1131.4,114.6l3,-3.4l3,3.4z" fill="#fbd3a4" stroke="#d46c04" stroke-width="1" stroke-linejoin="round"/>
<path d="M1131.4,117.4l3,3.4l3,-3.4z" fill="#fbd3a4" stroke="#d46c04" stroke-width="1" stroke-linejoin="round"/>
<!-- para spacing decrease (disabled) -->
<g fill="#c4c4c4">
<rect x="1164.2" y="107.35" width="19.6" height="2.4" rx="1.2"/><rect x="1171.2" y="111.45" width="8.6" height="2.4" rx="1.2"/><rect x="1171.2" y="117.25" width="12.6" height="2.4" rx="1.2"/><rect x="1164.2" y="121.25" width="11.6" height="2.4" rx="1.2"/>
<path d="M1164.4,111.4l3,3.4l3,-3.4z"/><path d="M1164.4,119.8l3,-3.4l3,3.4z"/>
</g>
</svg>

<!-- RULER -->
<svg id="ruler" style="left:0;top:0" width="1366" height="160" viewBox="0 0 1366 160">
<path d="M8,145h2v4h5v2h-7z" fill="#111"/>
<rect x="246" y="140" width="815" height="15" fill="#fff"/>
<rect x="245.5" y="140.5" width="76.5" height="14" fill="#f3f3f3" stroke="#ababab" stroke-width="1"/>
<rect x="986.5" y="140.5" width="74" height="14" rx="1" fill="#f3f3f3" stroke="#ababab" stroke-width="1"/>
<path d="M249.5,145v3M261.5,145v3M285.5,145v3M297.5,145v3M309.5,145v3M333.5,145v3M345.5,145v3M357.5,145v3M381.5,145v3M393.5,145v3M405.5,145v3M429.5,145v3M441.5,145v3M453.5,145v3M477.5,145v3M489.5,145v3M501.5,145v3M525.5,145v3M537.5,145v3M549.5,145v3M573.5,145v3M585.5,145v3M597.5,145v3M621.5,145v3M633.5,145v3M645.5,145v3M669.5,145v3M681.5,145v3M693.5,145v3M717.5,145v3M729.5,145v3M741.5,145v3M765.5,145v3M777.5,145v3M789.5,145v3M813.5,145v3M825.5,145v3M837.5,145v3M861.5,145v3M873.5,145v3M885.5,145v3M909.5,145v3M921.5,145v3M933.5,145v3M957.5,145v3M969.5,145v3M981.5,145v3M1005.5,145v3M1017.5,145v3M1029.5,145v3M1053.5,145v3" stroke="#a6a6a6" stroke-width="1"/>
<path d="M273.5,143v6M369.5,143v6M465.5,143v6M561.5,143v6M657.5,143v6M753.5,143v6M849.5,143v6M945.5,143v6M1041.5,143v6" stroke="#a6a6a6" stroke-width="1"/>
<path d="M417.5,140v1M417.5,153.5v1M513.5,140v1M513.5,153.5v1M609.5,140v1M609.5,153.5v1M705.5,140v1M705.5,153.5v1M801.5,140v1M801.5,153.5v1M897.5,140v1M897.5,153.5v1" stroke="#c8c8c8" stroke-width="1"/>
<text x="416.6" y="150.3" text-anchor="middle" font-family="Liberation Sans, sans-serif" font-size="9.8px" fill="#3c3c3c">1</text>
<text x="512.6" y="150.3" text-anchor="middle" font-family="Liberation Sans, sans-serif" font-size="9.8px" fill="#3c3c3c">2</text>
<text x="608.6" y="150.3" text-anchor="middle" font-family="Liberation Sans, sans-serif" font-size="9.8px" fill="#3c3c3c">3</text>
<text x="704.6" y="150.3" text-anchor="middle" font-family="Liberation Sans, sans-serif" font-size="9.8px" fill="#3c3c3c">4</text>
<text x="800.6" y="150.3" text-anchor="middle" font-family="Liberation Sans, sans-serif" font-size="9.8px" fill="#3c3c3c">5</text>
<text x="896.6" y="150.3" text-anchor="middle" font-family="Liberation Sans, sans-serif" font-size="9.8px" fill="#3c3c3c">6</text>
<text x="992.6" y="150.3" text-anchor="middle" font-family="Liberation Sans, sans-serif" font-size="9.8px" fill="#3c3c3c">7</text>
<path d="M368.5,152v3M366,154.5h5M415.5,152v3M413,154.5h5M463.5,152v3M461,154.5h5M510.5,152v3M508,154.5h5M557.5,152v3M555,154.5h5M604.5,152v3M602,154.5h5M652.5,152v3M650,154.5h5M699.5,152v3M697,154.5h5M746.5,152v3M744,154.5h5M793.5,152v3M791,154.5h5M841.5,152v3M839,154.5h5M888.5,152v3M886,154.5h5M935.5,152v3M933,154.5h5" stroke="#222" stroke-width="1" fill="none"/>
<path d="M317.5,140.5h9l-4.5,6.5z" fill="#fff" stroke="#111" stroke-width="1" stroke-linejoin="round"/>
<path d="M317.5,154.5h9l-4.5,-6.5z" fill="#fff" stroke="#111" stroke-width="1" stroke-linejoin="round"/>
<path d="M982,154.5h9.5l-4.75,-6.5z" fill="#fff" stroke="#111" stroke-width="1" stroke-linejoin="round"/>
</svg>
<!-- DOCUMENT -->
<div id="pshadowL" class="abs"></div>
<div id="page" class="abs"></div>
<div id="pshadowR" class="abs"></div>
<div id="img" class="abs"></div>
<svg id="diagram" style="left:0;top:0;will-change:transform" width="1366" height="700" viewBox="0 0 1366 700">
<path d="M420.2,182.4 C419,173 428,166.5 441,166.5 C449,166.5 455,170 457.7,175.6 C462,173.2 474,172.5 478.5,179 C481,183 482,187 482.2,190.2 C488,193 492,198 491.6,203.8 C491,213 484,221 473.3,222.5 C470,230 460,235 450.4,233.4 C446,232.5 443,230.5 441,228.2 C438,231.5 433,233 428.5,232.9 C421,232.5 416.5,227.5 415.5,221.5 C404,221 396.5,212 396.3,201.7 C396.3,191 407,183 420.2,182.4 Z" fill="#fff" stroke="#9fc3ca" stroke-width="1.2"/>
<text x="441.7" y="205.8" text-anchor="middle" font-family="Liberation Sans, sans-serif" font-size="9.7px" fill="#8c8c8c" stroke="#8c8c8c" stroke-width="0.3">Internet</text>
<path d="M484.9,308v53.5M484.9,486.5v57.5" stroke="#a9a9a9" stroke-width="1"/>
<rect x="451" y="225.2" width="69" height="52" fill="#4b4b4d"/>
<rect x="458.5" y="229.8" width="52.8" height="40.4" fill="#19b5a0"/>

<path d="M451.7,274.9h7.6v1.5h-7.6zM472.2,274.9h25.2v1.5h-25.2zM510.9,274.9h7.8v1.5h-7.8z" fill="#cbcbcb"/>
<path d="M451,277h69l6,27.2h-82z" fill="#4b4b4d"/><path d="M452,278.2h67l4.6,21.6h-76.2z" fill="#6d6e70"/>
<g fill="#e2e2e2">
<rect x="454.2" y="279.5" width="3.4" height="2.4" rx="0.4"/>
<rect x="459.0" y="279.5" width="3.4" height="2.4" rx="0.4"/>
<rect x="463.9" y="279.5" width="3.4" height="2.4" rx="0.4"/>
<rect x="468.7" y="279.5" width="3.4" height="2.4" rx="0.4"/>
<rect x="473.6" y="279.5" width="3.4" height="2.4" rx="0.4"/>
<rect x="478.4" y="279.5" width="3.4" height="2.4" rx="0.4"/>
<rect x="483.3" y="279.5" width="3.4" height="2.4" rx="0.4"/>
<rect x="488.1" y="279.5" width="3.4" height="2.4" rx="0.4"/>
<rect x="493.0" y="279.5" width="3.4" height="2.4" rx="0.4"/>
<rect x="497.8" y="279.5" width="3.4" height="2.4" rx="0.4"/>
<rect x="502.7" y="279.5" width="3.4" height="2.4" rx="0.4"/>
<rect x="507.5" y="279.5" width="3.4" height="2.4" rx="0.4"/>
<rect x="512.4" y="279.5" width="3.4" height="2.4" rx="0.4"/>
<rect x="453.2" y="284.2" width="4.1" height="3.6" rx="0.4"/>
<rect x="461.7" y="284.2" width="3.8" height="3.6" rx="0.4"/>
<rect x="466.9" y="284.2" width="3.8" height="3.6" rx="0.4"/>
<rect x="472.1" y="284.2" width="3.8" height="3.6" rx="0.4"/>
<rect x="477.4" y="284.2" width="3.8" height="3.6" rx="0.4"/>
<rect x="482.6" y="284.2" width="3.8" height="3.6" rx="0.4"/>
<rect x="487.8" y="284.2" width="3.8" height="3.6" rx="0.4"/>
<rect x="493.0" y="284.2" width="3.8" height="3.6" rx="0.4"/>
<rect x="498.3" y="284.2" width="3.8" height="3.6" rx="0.4"/>
<rect x="503.5" y="284.2" width="3.8" height="3.6" rx="0.4"/>
<rect x="508.7" y="284.2" width="9" height="3.6" rx="0.4"/>
<rect x="451.5" y="289.4" width="9" height="3.6" rx="0.4"/>
<rect x="462.2" y="289.4" width="3.9" height="3.6" rx="0.4"/>
<rect x="467.5" y="289.4" width="3.9" height="3.6" rx="0.4"/>
<rect x="472.8" y="289.4" width="3.9" height="3.6" rx="0.4"/>
<rect x="478.0" y="289.4" width="3.9" height="3.6" rx="0.4"/>
<rect x="483.3" y="289.4" width="3.9" height="3.6" rx="0.4"/>
<rect x="488.6" y="289.4" width="3.9" height="3.6" rx="0.4"/>
<rect x="493.9" y="289.4" width="3.9" height="3.6" rx="0.4"/>
<rect x="499.1" y="289.4" width="3.9" height="3.6" rx="0.4"/>
<rect x="504.4" y="289.4" width="3.9" height="3.6" rx="0.4"/>
<rect x="510.7" y="289.4" width="3.1" height="3.6" rx="0.4"/>
<rect x="515.2" y="289.4" width="3.1" height="3.6" rx="0.4"/>
<rect x="456.7" y="294.4" width="3.6" height="3.2" rx="0.4"/>
<rect x="461.7" y="294.4" width="3.6" height="3.2" rx="0.4"/>
<rect x="467" y="294.4" width="31" height="3.2" rx="0.4"/>
<rect x="499.7" y="294.4" width="3.6" height="3.2" rx="0.4"/>
<rect x="504.7" y="294.4" width="3.6" height="3.2" rx="0.4"/>
<rect x="509.7" y="294.4" width="3.6" height="3.2" rx="0.4"/>
</g>
<path d="M444.6,300.5h80.8l0.6,3.7h-82z" fill="#3f3f41"/>
<text x="543.8" y="258.8" font-family="Liberation Sans, sans-serif" font-weight="bold" font-size="10.9px" fill="#747577" stroke="#747577" stroke-width="0.3" letter-spacing="0.14">Presentation</text>
<text x="544.6" y="271.2" font-family="Liberation Sans, sans-serif" font-weight="bold" font-size="10.9px" fill="#747577" stroke="#747577" stroke-width="0.3" letter-spacing="0.14">(web server)</text>
<text x="545.6" y="430.2" font-family="Liberation Sans, sans-serif" font-weight="bold" font-size="10.9px" fill="#747577" stroke="#747577" stroke-width="0.3" letter-spacing="0.14">Application</text>
<text x="545.6" y="601.2" font-family="Liberation Sans, sans-serif" font-weight="bold" font-size="10.9px" fill="#747577" stroke="#747577" stroke-width="0.3" letter-spacing="0.14">Database</text>
<rect x="451" y="363.5" width="68.5" height="119.5" rx="2" fill="#5d5e60"/>
<rect x="455.6" y="370" width="58.6" height="10.4" fill="#d9d9d9"/>
<rect x="458" y="372" width="40.4" height="6.2" fill="#3fb3a6"/>
<rect x="503.4" y="372" width="8.4" height="2.3" fill="#e59457"/>
<rect x="455.6" y="383.5" width="58.6" height="10.4" fill="#d9d9d9"/>
<rect x="458" y="385.5" width="40.4" height="6.2" fill="#3fb3a6"/>
<rect x="503.4" y="385.5" width="8.4" height="2.3" fill="#e59457"/>
<rect x="455.6" y="401.4" width="58.6" height="77" fill="#c6c6c6"/>
<rect x="456" y="401.90" width="17.2" height="5.5" fill="#e4e4e4"/>
<rect x="457.6" y="403.40" width="1.2" height="1.2" fill="#8e8e8e"/>
<rect x="456" y="408.46" width="17.2" height="5.5" fill="#e4e4e4"/>
<rect x="457.6" y="409.96" width="1.2" height="1.2" fill="#8e8e8e"/>
<rect x="456" y="415.02" width="17.2" height="5.5" fill="#e4e4e4"/>
<rect x="457.6" y="416.52" width="1.2" height="1.2" fill="#8e8e8e"/>
<rect x="456" y="421.58" width="17.2" height="5.5" fill="#e4e4e4"/>
<rect x="457.6" y="423.08" width="1.2" height="1.2" fill="#8e8e8e"/>
<rect x="456" y="428.14" width="17.2" height="5.5" fill="#e4e4e4"/>
<rect x="457.6" y="429.64" width="1.2" height="1.2" fill="#8e8e8e"/>
<rect x="456" y="434.70" width="17.2" height="5.5" fill="#e4e4e4"/>
<rect x="457.6" y="436.20" width="1.2" height="1.2" fill="#8e8e8e"/>
<rect x="456" y="441.26" width="17.2" height="5.5" fill="#e4e4e4"/>
<rect x="457.6" y="442.76" width="1.2" height="1.2" fill="#8e8e8e"/>
<rect x="456" y="447.82" width="17.2" height="5.5" fill="#e4e4e4"/>
<rect x="457.6" y="449.32" width="1.2" height="1.2" fill="#8e8e8e"/>
<rect x="456" y="454.38" width="17.2" height="5.5" fill="#e4e4e4"/>
<rect x="457.6" y="455.88" width="1.2" height="1.2" fill="#8e8e8e"/>
<rect x="456" y="460.94" width="17.2" height="5.5" fill="#e4e4e4"/>
<rect x="457.6" y="462.44" width="1.2" height="1.2" fill="#8e8e8e"/>
<rect x="456" y="467.50" width="17.2" height="5.5" fill="#e4e4e4"/>
<rect x="457.6" y="469.00" width="1.2" height="1.2" fill="#8e8e8e"/>
<rect x="476" y="401.90" width="17.2" height="5.5" fill="#e4e4e4"/>
<rect x="477.6" y="403.40" width="1.2" height="1.2" fill="#8e8e8e"/>
<rect x="476" y="408.46" width="17.2" height="5.5" fill="#e4e4e4"/>
<rect x="477.6" y="409.96" width="1.2" height="1.2" fill="#8e8e8e"/>
<rect x="476" y="415.02" width="17.2" height="5.5" fill="#e4e4e4"/>
<rect x="477.6" y="416.52" width="1.2" height="1.2" fill="#8e8e8e"/>
<rect x="476" y="421.58" width="17.2" height="5.5" fill="#e4e4e4"/>
<rect x="477.6" y="423.08" width="1.2" height="1.2" fill="#8e8e8e"/>
<rect x="476" y="428.14" width="17.2" height="5.5" fill="#e4e4e4"/>
<rect x="477.6" y="429.64" width="1.2" height="1.2" fill="#8e8e8e"/>
<rect x="476" y="434.70" width="17.2" height="5.5" fill="#e4e4e4"/>
<rect x="477.6" y="436.20" width="1.2" height="1.2" fill="#8e8e8e"/>
<rect x="476" y="441.26" width="17.2" height="5.5" fill="#e4e4e4"/>
<rect x="477.6" y="442.76" width="1.2" height="1.2" fill="#8e8e8e"/>
<rect x="476" y="447.82" width="17.2" height="5.5" fill="#e4e4e4"/>
<rect x="477.6" y="449.32" width="1.2" height="1.2" fill="#8e8e8e"/>
<rect x="476" y="454.38" width="17.2" height="5.5" fill="#e4e4e4"/>
<rect x="477.6" y="455.88" width="1.2" height="1.2" fill="#8e8e8e"/>
<rect x="476" y="460.94" width="17.2" height="5.5" fill="#e4e4e4"/>
<rect x="477.6" y="462.44" width="1.2" height="1.2" fill="#8e8e8e"/>
<rect x="476" y="467.50" width="17.2" height="5.5" fill="#e4e4e4"/>
<rect x="477.6" y="469.00" width="1.2" height="1.2" fill="#8e8e8e"/>
<rect x="496.4" y="401.90" width="17.2" height="5.5" fill="#e4e4e4"/>
<rect x="498.0" y="403.40" width="1.2" height="1.2" fill="#8e8e8e"/>
<rect x="496.4" y="408.46" width="17.2" height="5.5" fill="#e4e4e4"/>
<rect x="498.0" y="409.96" width="1.2" height="1.2" fill="#8e8e8e"/>
<rect x="496.4" y="415.02" width="17.2" height="5.5" fill="#e4e4e4"/>
<rect x="498.0" y="416.52" width="1.2" height="1.2" fill="#8e8e8e"/>
<rect x="496.4" y="421.58" width="17.2" height="5.5" fill="#e4e4e4"/>
<rect x="498.0" y="423.08" width="1.2" height="1.2" fill="#8e8e8e"/>
<rect x="496.4" y="428.14" width="17.2" height="5.5" fill="#e4e4e4"/>
<rect x="498.0" y="429.64" width="1.2" height="1.2" fill="#8e8e8e"/>
<rect x="496.4" y="434.70" width="17.2" height="5.5" fill="#e4e4e4"/>
<rect x="498.0" y="436.20" width="1.2" height="1.2" fill="#8e8e8e"/>
<rect x="496.4" y="441.26" width="17.2" height="5.5" fill="#e4e4e4"/>
<rect x="498.0" y="442.76" width="1.2" height="1.2" fill="#8e8e8e"/>
<rect x="496.4" y="447.82" width="17.2" height="5.5" fill="#e4e4e4"/>
<rect x="498.0" y="449.32" width="1.2" height="1.2" fill="#8e8e8e"/>
<rect x="496.4" y="454.38" width="17.2" height="5.5" fill="#e4e4e4"/>
<rect x="498.0" y="455.88" width="1.2" height="1.2" fill="#8e8e8e"/>
<rect x="496.4" y="460.94" width="17.2" height="5.5" fill="#e4e4e4"/>
<rect x="498.0" y="462.44" width="1.2" height="1.2" fill="#8e8e8e"/>
<rect x="496.4" y="467.50" width="17.2" height="5.5" fill="#e4e4e4"/>
<rect x="498.0" y="469.00" width="1.2" height="1.2" fill="#8e8e8e"/>
<rect x="455.6" y="475" width="58.6" height="1.2" fill="#8a8a8a"/>
<rect x="455.6" y="476.2" width="58.6" height="2.2" fill="#d0d0d0"/>
<path d="M448.4,559 V629 A36.6,12.6 0 0 0 521.6,629 V559 A36.6,12.6 0 0 1 448.4,559Z" fill="#d3fbf6"/>
<path d="M449.4,567.6 A35.6,9.6 0 0 0 520.6,567.6 V588 A35.6,7.0 0 0 1 449.4,588 Z" fill="#18a89a"/>
<path d="M449.4,592.2 A35.6,6.8 0 0 0 520.6,592.2 V610.2 A35.6,7.8 0 0 1 449.4,610.2 Z" fill="#18a89a"/>
<path d="M449.4,615.4 A35.6,7.2 0 0 0 520.6,615.4 V632.8 A35.6,7.2 0 0 1 449.4,632.8 Z" fill="#18a89a"/>
<ellipse cx="485" cy="558.8" rx="36.3" ry="12.6" fill="#58595b"/>
</svg>
<div id="doctext" class="abs">HTML/CSS/Bootstrap/JS
<b style="margin-left:0.9px">  will include a HTML Form</b>





 Python
<b style="margin-left:0.9px">  will include a Python route</b>





SQL Database
<b>Will include our users table</b></div>
<div id="cursor" class="abs"></div>
<div class="abs" style="left:1307px;top:136px;width:12px;height:530px;background:#fbfbfb;"></div>
<div class="abs" style="left:1310px;top:197.5px;width:6px;height:238px;border-radius:3px;background:#a9a9a9;"></div>
<div class="abs" style="left:1319px;top:136px;width:7px;height:530px;background:#f9f9f9;border-left:1px solid #b0b0b0;border-right:1px solid #b0b0b0;box-sizing:border-box;"></div>
<div class="abs" style="left:1319px;top:136px;width:47px;height:1px;background:#bcbcbc;"></div>
<div class="abs" style="left:1319px;top:665px;width:47px;height:1px;background:#b4b4b4;"></div>
<div class="abs" style="left:1319.5px;top:365px;width:6.5px;height:72.5px;background:#2d2d2d;"></div>
<svg id="sidebar" style="left:0;top:0;will-change:transform" width="1366" height="700" viewBox="0 0 1366 700">
<path d="M1321,397.2l4.2,3.8l-4.2,3.8z" fill="#fff"/>
<g fill="#555"><rect x="1345" y="150.3" width="2" height="2"/><rect x="1345" y="155.1" width="2" height="2"/><rect x="1345" y="160" width="2" height="2"/></g>
<path d="M1335,175.5h22" stroke="#dcdcdc" stroke-width="1"/>
<rect x="1330.5" y="179.5" width="31" height="31" rx="4" fill="#f2f2f2" stroke="#c9c9c9" stroke-width="1"/>
<!-- wrench -->
<path d="M1336.6,188.6l2.4,2.3l2.2,-0.5l0.6,-2.2l-2.4,-2.4a4,4 0 0 1 5,5.2l7.4,7.3a3.9,3.9 0 0 1 5.2,4.8l-2.4,-2.3l-2.2,0.5l-0.6,2.2l2.4,2.4a4,4 0 0 1 -5,-5.2l-7.4,-7.3a3.9,3.9 0 0 1 -5.2,-4.8z" fill="#ececec" stroke="#9a9a9a" stroke-width="1" stroke-linejoin="round"/>
<!-- page -->
<path d="M1337.5,239.2h17.4" stroke="#8a8a8a" stroke-width="1.4" opacity="0.6"/>
<path d="M1338.3,220h11.2l5.5,5.5v12.3a0.8,0.8 0 0 1 -0.8,0.8h-15.9a0.8,0.8 0 0 1 -0.8,-0.8v-17a0.8,0.8 0 0 1 0.8,-0.8z" fill="#f2f2f0" stroke="#a2a2a2" stroke-width="0.9"/>
<path d="M1349.5,220q0.8,3.6 -0.6,5.4q2.6,-0.8 6.1,0.1z" fill="#fdfdfd" stroke="#a2a2a2" stroke-width="0.7"/>
<!-- T + triangle -->
<text transform="translate(1346.2,275) scale(1.08,1)" text-anchor="middle" font-family="Liberation Serif, serif" font-weight="bold" font-size="30px" fill="#4a4b4d">T</text>
<path d="M1334.6,261.3v15.4h20.2z" fill="#73c44f" stroke="#3f8f20" stroke-width="1" stroke-linejoin="round"/>
<path d="M1338,269.2v4.6h6.2z" fill="#d9f0cd" stroke="#4f9f30" stroke-width="0.7"/>
<path d="M1337,275.6h1M1340,275.6h1M1343,275.6h1M1346,275.6h1M1349,275.6h1" stroke="#c8a020" stroke-width="0.8"/>
<!-- gallery -->
<path d="M1342.7,293.3l3.3,-3.6l3.3,3.6" fill="none" stroke="#8a8a8a" stroke-width="1"/>
<rect x="1335.8" y="293.8" width="20.6" height="13.2" rx="1.8" fill="#e8a838" stroke="#b87414" stroke-width="1.3"/>
<linearGradient id="gSky" x1="0" y1="0" x2="0" y2="1"><stop offset="0" stop-color="#4f7fc0"/><stop offset="0.55" stop-color="#e9b070"/><stop offset="1" stop-color="#f59a1c"/></linearGradient>
<rect x="1338" y="296" width="16.2" height="8.8" fill="url(#gSky)"/>
<ellipse cx="1343" cy="304.8" rx="2.8" ry="1.8" fill="#fff0a0"/>
<path d="M1346.6,304.8v-3.8l-2.2,-2.4M1346.6,301.2l0.4,-2.4l1.8,-1.8M1347,300l2.4,-1M1345.4,299.6l-0.2,-1.8" stroke="#2a1c08" stroke-width="0.8" fill="none"/>
<!-- compass -->
<circle cx="1346" cy="334.8" r="10.2" fill="#f6f6f6" stroke="#a4a4a4" stroke-width="1.2"/>
<circle cx="1346" cy="334.8" r="8" fill="#fdfdfd" stroke="#c8c8c8" stroke-width="1.3"/>
<path d="M1341.2,329.8l6.3,3.5l-3,3z" fill="#e0243a"/>
<path d="M1350.8,339.8l-6.3,-3.5l3,-3z" fill="#3f6fcf"/>
</svg>

<!--SIDEBAR-->
<!-- FIND BAR -->
<div id="findbar" class="abs"></div>
<!-- find bar widgets -->
<div class="combo" style="left:45px;top:671px;width:250px;height:30px;"><div class="sep" style="left:218px"></div><div style="position:absolute;left:219px;top:0;right:0;bottom:0;background:#fafafa;border-radius:0 3px 3px 0"></div></div>
<div class="t" style="left:55.3px;top:678.5px;font-size:12.6px;color:#8a8a8a;">Find</div>
<div class="t" style="left:363.6px;top:678.6px;font-size:12.6px;color:#8e8e8e;letter-spacing:-0.05px;">Find All</div>
<div class="abs" style="left:415px;top:679px;width:14px;height:14px;box-sizing:border-box;background:#fff;border:1px solid #c6c6c6;border-radius:2.5px;"></div>
<div class="t" style="left:436.6px;top:678.6px;font-size:12.5px;color:#1c1c1c;">Match Case</div>
<div class="combo" style="left:555px;top:671px;width:150px;height:30px;background:#fafafa;"></div>
<div class="t" style="left:586px;top:678.5px;font-size:12.9px;color:#1c1c1c;">Page</div>
<svg id="findsvg" style="left:0;top:0" width="1366" height="768" viewBox="0 0 1366 768">
<g fill="#bcbcbc"><rect x="3" y="674" width="3" height="3"/><rect x="3" y="678" width="3" height="3"/><rect x="3" y="682" width="3" height="3"/><rect x="3" y="686" width="3" height="3"/><rect x="3" y="690" width="3" height="3"/><rect x="3" y="694" width="3" height="3"/></g>
<!-- close X -->
<path d="M23,679.8l12.2,12.4M35.2,679.8l-12.2,12.4" stroke="#707070" stroke-width="4.8" stroke-linecap="round"/>
<path d="M23,679.8l12.2,12.4M35.2,679.8l-12.2,12.4" stroke="#969696" stroke-width="3" stroke-linecap="round"/>
<path d="M274.2,684.3h9.6l-4.8,4.6z" fill="#1c1c1c"/>
<path d="M684.4,684.3h9.4l-4.7,4.6z" fill="#1c1c1c"/>
<!-- find prev/next disabled -->
<g fill="none" stroke="#d3d3d3" stroke-width="3.8" stroke-linejoin="miter">
<path d="M304.2,686.4l7.5,-7.8l7.5,7.8"/>
<path d="M336.9,685.4l7.5,7.2l7.5,-7.2"/>
</g>
<g fill="#d3d3d3"><circle cx="311.7" cy="687.8" r="2.1"/><circle cx="311.7" cy="693.4" r="2.3"/><circle cx="344.4" cy="677.4" r="2.3"/><circle cx="344.4" cy="683" r="2.1"/></g>
<!-- find & replace small -->
<g transform="translate(2.2,610)">
<path d="M532.5,80.8l6.4,5.8" stroke="#2a2a2a" stroke-width="3" stroke-linecap="round"/>
<circle cx="526.5" cy="74.6" r="7.3" fill="url(#gGlass)" stroke="#3348a8" stroke-width="2.5"/>
<path d="M523.3,84.2l13.2,-14.4l2.3,2.1l-13.2,14.4l-3.3,1.2z" fill="#f29a2e" stroke="#b5651a" stroke-width="0.6"/>
<path d="M524.5,84.9l12.6,-13.8" stroke="#fbd08a" stroke-width="0.8"/>
<path d="M536.5,69.8l1.2,-1.3q1,-0.8 2,0.1l0.6,0.6q0.8,1 -0.1,1.9l-1.4,0.8z" fill="#e8343c"/>
<path d="M535.6,70.8l0.9,-1l2.3,2.1l-0.9,1z" fill="#9a9a9a"/>
<path d="M522.3,87.5l1,-3.3l2.3,2.1z" fill="#e8c9a0"/><path d="M522.3,87.5l0.4,-1.4l1,0.9z" fill="#222"/>
</g>
<!-- page icon in combo -->
<path d="M565.3,678.8h7.6l4.4,4.4v9.4a0.7,0.7 0 0 1 -0.7,0.7h-11.3a0.7,0.7 0 0 1 -0.7,-0.7v-13.1a0.7,0.7 0 0 1 0.7,-0.7z" fill="#f0f0ee" stroke="#8e8e8e" stroke-width="0.9"/>
<path d="M572.9,678.8v4.4h4.4" fill="#fff" stroke="#8e8e8e" stroke-width="0.8"/>
<!-- nav up/down -->
<g fill="#fbfbfb" stroke="#8c8c8c" stroke-width="1" stroke-linejoin="round">
<path d="M712.4,685.6l9.2,-9.8l9.2,9.8l-1.9,1.9l-7.3,-7.6l-7.3,7.6z"/>
<circle cx="721.6" cy="687.6" r="1.7"/><circle cx="721.6" cy="693.2" r="2"/>
<path d="M745.3,685l9.2,9.4l9.2,-9.4l-1.9,-1.9l-7.3,7.4l-7.3,-7.4z"/>
<circle cx="754.5" cy="677.6" r="2"/><circle cx="754.5" cy="683.3" r="1.7"/>
</g>
</svg>

<!-- STATUS -->
<div id="status" class="abs"></div>
<div class="t" style="left:10.3px;top:709.5px;font-size:12.5px;letter-spacing:-0.31px;color:#1a1a1a;">Page 1 of 1</div>
<div class="t" style="left:137.9px;top:709.5px;font-size:12.5px;letter-spacing:-0.14px;color:#1a1a1a;">19 words, 128 characters</div>
<div class="t" style="left:387.9px;top:709.5px;font-size:12.5px;letter-spacing:0.05px;color:#1a1a1a;">Default Style</div>
<div class="t" style="left:562px;top:709.5px;font-size:12.5px;letter-spacing:-0.5px;color:#1a1a1a;">English (USA)</div>
<div class="t" style="left:1326px;top:709.5px;font-size:12.5px;letter-spacing:-0.57px;color:#1a1a1a;">100%</div>
<svg id="statussvg" style="left:0;top:0" width="1366" height="768" viewBox="0 0 1366 768">
<path d="M128.5,710.5v13.5M379.5,710.5v13.5M524.5,710.5v13.5M668.5,710.5v13.5M736.5,710.5v13.5M765.5,710.5v13.5M794.5,710.5v13.5M824.5,710.5v13.5M1098.5,710.5v13.5M1174.5,710.5v13.5M1318.5,710.5v13.5" stroke="#d2d2d2" stroke-width="1"/>
<!-- insert mode -->
<rect x="746" y="713.5" width="8.5" height="7.5" fill="#8d8d8d"/><path d="M756.5,712.5v10M755,712.5h3M755,722.5h3" stroke="#555" stroke-width="0.9"/>
<!-- modified -->
<path d="M776.5,712.5h6.5v3M783,720v2.5h-6.5v-10" fill="none" stroke="#777" stroke-width="0.9"/>
<path d="M785,715.2v5.6M782.6,716.6l4.8,2.8M787.4,716.6l-4.8,2.8" stroke="#c80000" stroke-width="1.1"/>
<!-- view layout -->
<path d="M1111.5,713.5h4.5l2.5,2.5v6.5h-7z" fill="#fff" stroke="#444" stroke-width="0.9"/><path d="M1116,713.5v2.5h2.5" fill="none" stroke="#444" stroke-width="0.8"/>
<g fill="#fafafa" stroke="#a8a8a8" stroke-width="0.9">
<path d="M1125.5,713.5h4.5l2.5,2.5v6.5h-7z"/><path d="M1130,713.5v2.5h2.5" fill="none"/>
<path d="M1135.5,713.5h4.5l2.5,2.5v6.5h-7z"/><path d="M1140,713.5v2.5h2.5" fill="none"/>
<path d="M1149.5,722.5v-6.5l2.5,-2.5h4.5v9z"/><path d="M1152,713.5v2.5h-2.5" fill="none"/>
<path d="M1157.5,713.5h4.5l2.5,2.5v6.5h-7z"/><path d="M1162,713.5v2.5h2.5" fill="none"/>
</g>
<!-- zoom slider -->
<path d="M1185,718h8" stroke="#9a9a9a" stroke-width="1.8"/>
<path d="M1302,718h8M1306,714v8" stroke="#9a9a9a" stroke-width="1.8"/>
<path d="M1199,718h96.5" stroke="#2e2e2e" stroke-width="1"/>
<path d="M1214,715v6" stroke="#2e2e2e" stroke-width="1.8"/>
<circle cx="1246.6" cy="718" r="4" fill="#fff" stroke="#555" stroke-width="1"/>
</svg>

<!-- TASKBAR -->
<div id="taskbar" class="abs"></div>
<div class="abs" style="left:370px;top:727px;width:40px;height:41px;background:#515151;"></div>
<div class="t" style="left:1327px;top:740.5px;font-size:13px;font-weight:bold;letter-spacing:0.3px;color:#ececec;">07:56</div>
<svg id="tasksvg" style="left:0;top:0;will-change:transform" width="1366" height="768" viewBox="0 0 1366 768">
<defs>
<linearGradient id="gTerm" x1="0" y1="0" x2="0" y2="1"><stop offset="0" stop-color="#2b2b2b"/><stop offset="1" stop-color="#151515"/></linearGradient>
<linearGradient id="gVs" x1="0" y1="0" x2="0" y2="1"><stop offset="0" stop-color="#2a8fe6"/><stop offset="1" stop-color="#1766c4"/></linearGradient>
<linearGradient id="gWr" x1="0" y1="0" x2="0" y2="1"><stop offset="0" stop-color="#2490d4"/><stop offset="1" stop-color="#176a9f"/></linearGradient>
<linearGradient id="gCam" x1="0" y1="0" x2="0" y2="1"><stop offset="0" stop-color="#4670b6"/><stop offset="1" stop-color="#2f4f8c"/></linearGradient>
<clipPath id="cpChrome"><rect x="237.9" y="732.6" width="28.6" height="28.7" rx="5"/></clipPath>
</defs>
<!-- running indicators -->
<g fill="#8fb364"><rect x="94" y="766" width="40" height="2"/><rect x="232" y="766" width="40" height="2"/><rect x="278" y="766" width="40" height="2"/><rect x="370" y="766" width="40" height="2"/><rect x="416" y="766" width="40" height="2"/></g>
<!-- mint menu -->
<circle cx="21.1" cy="748" r="14.6" fill="none" stroke="#e9e9e9" stroke-width="2.7"/>
<path d="M13.6,739.8v10.6q0,4.4 4.4,4.4h6.6q4.4,0 4.4,-4.4v-5.6q0,-2.2 -2.1,-2.2t-2.1,2.2v5.4M24.8,744.8q0,-2.2 -2.1,-2.2t-2.1,2.2v5.4" fill="none" stroke="#e9e9e9" stroke-width="2.2" stroke-linejoin="round" transform="translate(-0.2,0)"/>
<!-- show desktop / green window -->
<rect x="51" y="736" width="30" height="24" fill="#87b158"/><rect x="51" y="736" width="30" height="5" fill="#6c8f47"/><rect x="55" y="738.6" width="2" height="1.6" fill="#fff"/>
<!-- terminal -->
<rect x="99.8" y="733" width="28.2" height="28.2" rx="5.5" fill="url(#gTerm)" stroke="#0c0c0c" stroke-width="0.9"/><rect x="100.6" y="733.8" width="26.6" height="26.6" rx="4.8" fill="none" stroke="#4a4a4a" stroke-width="0.7"/>
<text x="103" y="743.6" font-family="Liberation Mono, monospace" font-weight="bold" font-size="8.5px" fill="#f2f2f2">$</text><path d="M109.2,743.4h5.6" stroke="#f2f2f2" stroke-width="1.1"/>
<!-- android studio -->
<circle cx="160.2" cy="747" r="14.4" fill="#fff"/>
<path d="M166,742l8,8a14.4,14.4 0 0 1 -9,10.5l-8,-8z" fill="#e4e4e4"/>
<path d="M155.2,739.6a5.2,5.2 0 0 1 10.2,0z" fill="#3ddc84"/>
<path d="M156.4,736l1.3,1.8M164.2,736l-1.3,1.8" stroke="#3ddc84" stroke-width="0.8"/>
<path d="M153,740.3h2.2v-0.7h10.2v0.7h2v13.2h-2.4l-6,2.8h-3.6l-2.4,-2.8z" fill="#4285f4"/>
<path d="M153,740.3h2.2v2h-2.2z" fill="#073042"/>
<path d="M160.2,743.6v2.2M160.2,745.4l-3.6,9.6M160.2,745.4l3.6,9.6M158.2,751.6h4" stroke="#073042" stroke-width="1.5" fill="none" stroke-linecap="round"/>
<path d="M166.2,745.2v9.6" stroke="#073042" stroke-width="1.7"/>
<!-- nemo folder -->
<path d="M194.4,739.5v-3q0,-1.2 1.2,-1.2h5q0.9,0 1.2,0.7l0.4,0.9h14.6q1.2,0 1.2,1.2v1.4z" fill="#f4f4f4"/>
<rect x="191.2" y="739.2" width="29.8" height="19.6" rx="1.6" fill="#87b158"/>
<!-- chrome -->
<g clip-path="url(#cpChrome)">
<rect x="237.9" y="732.6" width="28.6" height="28.7" fill="#e8453c"/>
<path d="M237.9,736l9,12.5l5,13h-14z" fill="#3aa757"/>
<path d="M237.9,738.5l8.6,11.5l5.3,11.5h-13.9z" fill="#34a353"/>
<path d="M266.5,743.5h-14.5l5.5,4.5l-5.6,13.4h14.6z" fill="#fbc116"/>
<path d="M237.9,732.6h28.6v11h-14.6l-7,4.5z" fill="#e8453c"/>
<path d="M237.9,732.6h28.6v3h-28.6z" fill="#f0675c" opacity="0.6"/>
</g>
<circle cx="251.8" cy="746.7" r="8" fill="#f4f4f4"/>
<circle cx="251.8" cy="746.7" r="6.4" fill="#4a8fd9"/>
<circle cx="251.8" cy="745.2" r="5" fill="#5a9de3" opacity="0.7"/>
<!-- vscode -->
<rect x="284" y="732.8" width="28" height="28.4" rx="5.5" fill="url(#gVs)"/>
<path d="M290.9,743.6l11.4,8M290.9,750.2l11.4,-8" stroke="#fff" stroke-width="2.5" fill="none"/><path d="M302.2,739.3l4.2,2v11.2l-4.2,2z" fill="#fff"/>
<!-- postman -->
<circle cx="344" cy="746.5" r="15.3" fill="#ff6c37"/>
<path d="M337.3,756.6l1.2,-3l9.3,-10.6l2.9,2.7l-9.6,10.2l-2.6,0.4z" fill="#fff"/>
<path d="M336.4,757.6l2.4,-2.6l0.9,0.9z" fill="#fff"/>
<circle cx="351.2" cy="741.2" r="2.5" fill="#fff"/><circle cx="351.2" cy="741.2" r="1.1" fill="#ff8c62"/>
<path d="M340.4,753.4l8,-8.6M341.6,754.6l8,-8.6" stroke="#ff8c62" stroke-width="0.5"/>
<!-- writer -->
<rect x="375.8" y="732.8" width="28.4" height="28.4" rx="5.5" fill="url(#gWr)"/>
<path d="M381,741h12M381,745.1h18M381,749.2h18M381,753.2h18" stroke="#fff" stroke-width="2.2"/>
<!-- screenshot -->
<rect x="422" y="732.8" width="28.2" height="28.4" rx="5.5" fill="url(#gCam)"/>
<rect x="426" y="741" width="20" height="14" rx="1" fill="#fff"/>
<rect x="434.8" y="738.5" width="8.4" height="1.2" fill="#fff"/>
<rect x="428" y="742.2" width="2.6" height="1" fill="#3d64a8"/>
<circle cx="439" cy="748" r="3.4" fill="#fff" stroke="#3d64a8" stroke-width="1.2"/>
<circle cx="424.2" cy="734.9" r="6.4" fill="#3f3f3f"/>
<text x="424.2" y="738.7" text-anchor="middle" font-family="Liberation Sans, sans-serif" font-weight="bold" font-size="10.5px" fill="#dcdcdc">4</text>
<!-- TRAY -->
<!-- bluetooth -->
<ellipse cx="1183.6" cy="747.8" rx="5.9" ry="8" fill="#dedede"/>
<path d="M1180.8,744.6l5.4,5.6l-2.7,2.8v-10.4l2.7,2.8l-5.4,5.6" fill="none" stroke="#333" stroke-width="1"/>
<!-- clipboard ! -->
<rect x="1201" y="742.6" width="12" height="12" fill="none" stroke="#f0f0f0" stroke-width="1.9"/>
<path d="M1204.6,742.4v-1.6h4.8v1.6" fill="#2f2f2f" stroke="#f0f0f0" stroke-width="1.6"/>
<path d="M1207,745.4v4.4M1207,751v1.6" stroke="#f0f0f0" stroke-width="1.8"/>
<!-- shield -->
<path d="M1231,740.8q3.6,2.2 7.4,2.2q0.2,8.4 -7.4,12q-7.6,-3.6 -7.4,-12q3.8,0 7.4,-2.2z" fill="#2f2f2f" stroke="#ececec" stroke-width="1.6" stroke-linejoin="round"/><path d="M1231,743.3q2.4,1.4 4.9,1.5q0,5.4 -4.9,7.9q-4.9,-2.5 -4.9,-7.9q2.5,-0.1 4.9,-1.5z" fill="#c8141a"/>
<path d="M1231,745v3.8M1231,750v1.5" stroke="#fff" stroke-width="1.7"/>
<!-- wifi -->
<path d="M1250.3,746.2a11,11 0 0 1 15.4,0" fill="none" stroke="#8a8a8a" stroke-width="1.9"/>
<path d="M1252.8,749a7.4,7.4 0 0 1 10.4,0" fill="none" stroke="#f0f0f0" stroke-width="1.9"/>
<path d="M1255.3,751.7a3.9,3.9 0 0 1 5.4,0" fill="none" stroke="#f0f0f0" stroke-width="1.9"/>
<circle cx="1258" cy="754" r="1.3" fill="#f0f0f0"/>
<!-- volume -->
<path d="M1276,745.4h3.2l4.4,-4v13.4l-4.4,-4h-3.2z" fill="#f0f0f0"/>
<path d="M1285.4,745.2a3.6,3.6 0 0 1 0,5.8" fill="none" stroke="#f0f0f0" stroke-width="1.5"/>
<path d="M1287.4,743a6.4,6.4 0 0 1 0,10.2" fill="none" stroke="#f0f0f0" stroke-width="1.5"/>
<path d="M1289.4,740.8a9.4,9.4 0 0 1 0,14.6" fill="none" stroke="#8a8a8a" stroke-width="1.5"/>
<!-- battery -->
<rect x="1304.6" y="742.6" width="11" height="12.4" fill="#2f2f2f" stroke="#f4f4f4" stroke-width="1.9"/><rect x="1306.8" y="745.4" width="6.6" height="7.4" fill="#d6d6d6"/>
<rect x="1307" y="740.3" width="6.2" height="2.2" fill="#f4f4f4"/>
</svg>

</body>
</html>
